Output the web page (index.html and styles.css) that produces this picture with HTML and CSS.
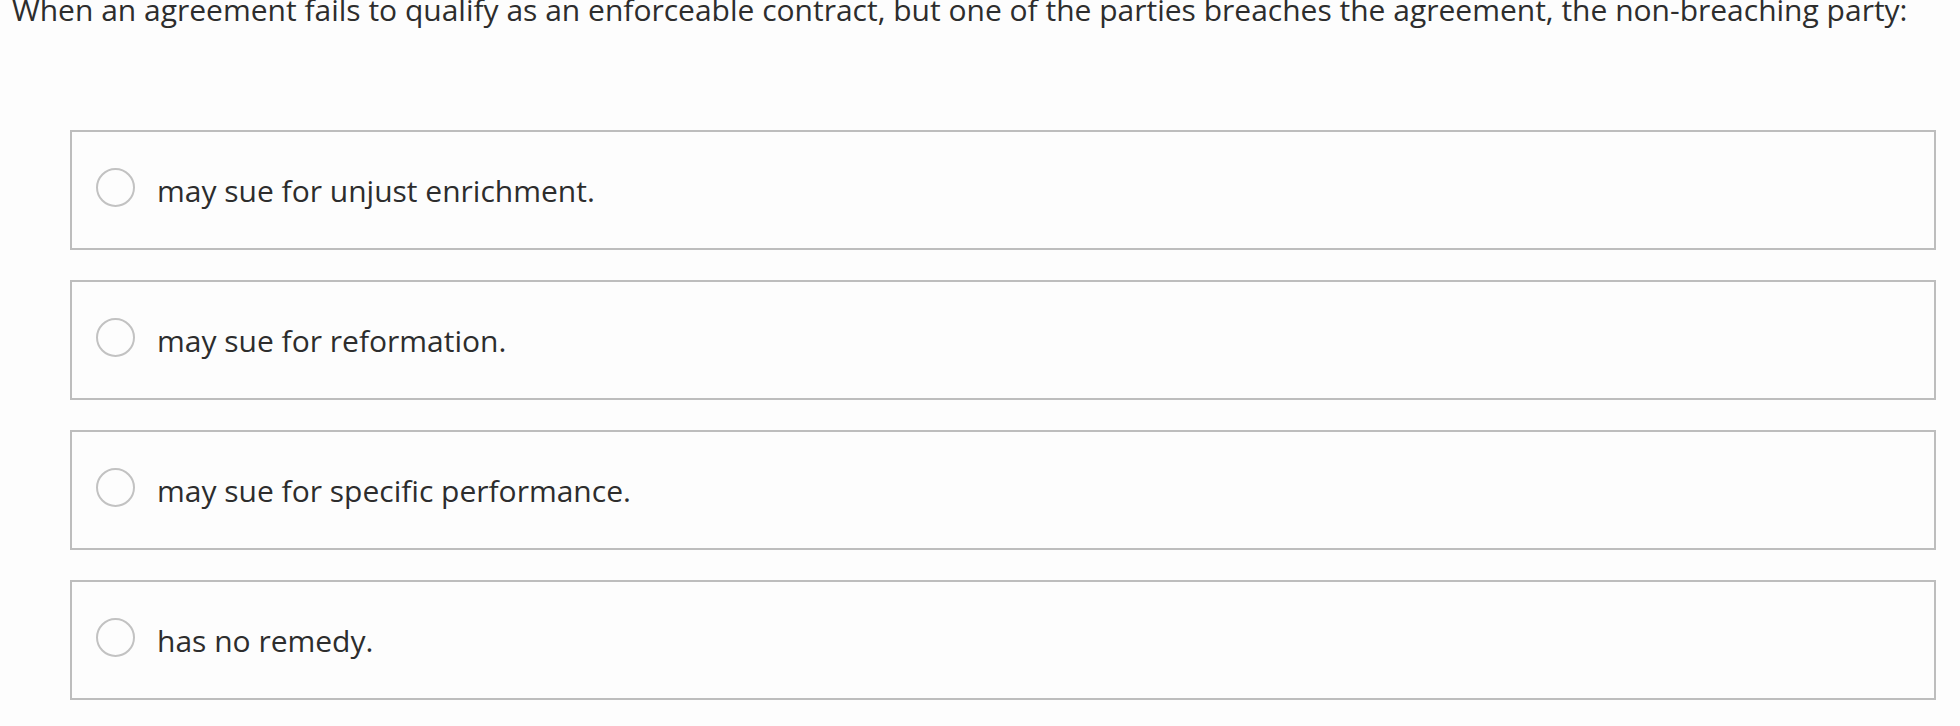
FILE: index.html
```html
<!DOCTYPE html>
<html lang="en">
<head>
  <meta charset="UTF-8" />
  <meta name="viewport" content="width=device-width, initial-scale=1.0"/>
  <title>Question</title>
  <link rel="stylesheet" href="styles.css">
</head>
<body>
  <div class="question">
    <p class="prompt">When an agreement fails to qualify as an enforceable contract, but one of the parties breaches the agreement, the non-breaching party:</p>

    <div class="answers">
      <label class="option">
        <span class="radio"></span>
        <span class="text">may sue for unjust enrichment.</span>
      </label>
      <label class="option">
        <span class="radio"></span>
        <span class="text">may sue for reformation.</span>
      </label>
      <label class="option">
        <span class="radio"></span>
        <span class="text">may sue for specific performance.</span>
      </label>
      <label class="option">
        <span class="radio"></span>
        <span class="text">has no remedy.</span>
      </label>
    </div>
  </div>
</body>
</html>
```

FILE: styles.css
```css
body {
  font-family: "Open Sans", Arial, sans-serif;
  margin: 0;
  background: #fdfdfd;
  color: #2d2d2d;
}
.question {
  padding: 0 24px 0 12px;
}
.prompt {
  font-size: 30px;
  line-height: 40px;
  margin: -10px 0 0 0;
  white-space: nowrap;
}
.answers {
  margin: 100px 0 0 58px;
  display: flex;
  flex-direction: column;
  gap: 30px;
}
.option {
  display: flex;
  align-items: center;
  height: 116px;
  border: 2px solid #bdbdbd;
  padding: 0 24px;
  font-size: 30px;
  cursor: pointer;
}
.radio {
  width: 35px;
  height: 35px;
  border: 2px solid #c2c2c2;
  border-radius: 50%;
  margin: 0 22px 5px 0;
  flex-shrink: 0;
}
```
